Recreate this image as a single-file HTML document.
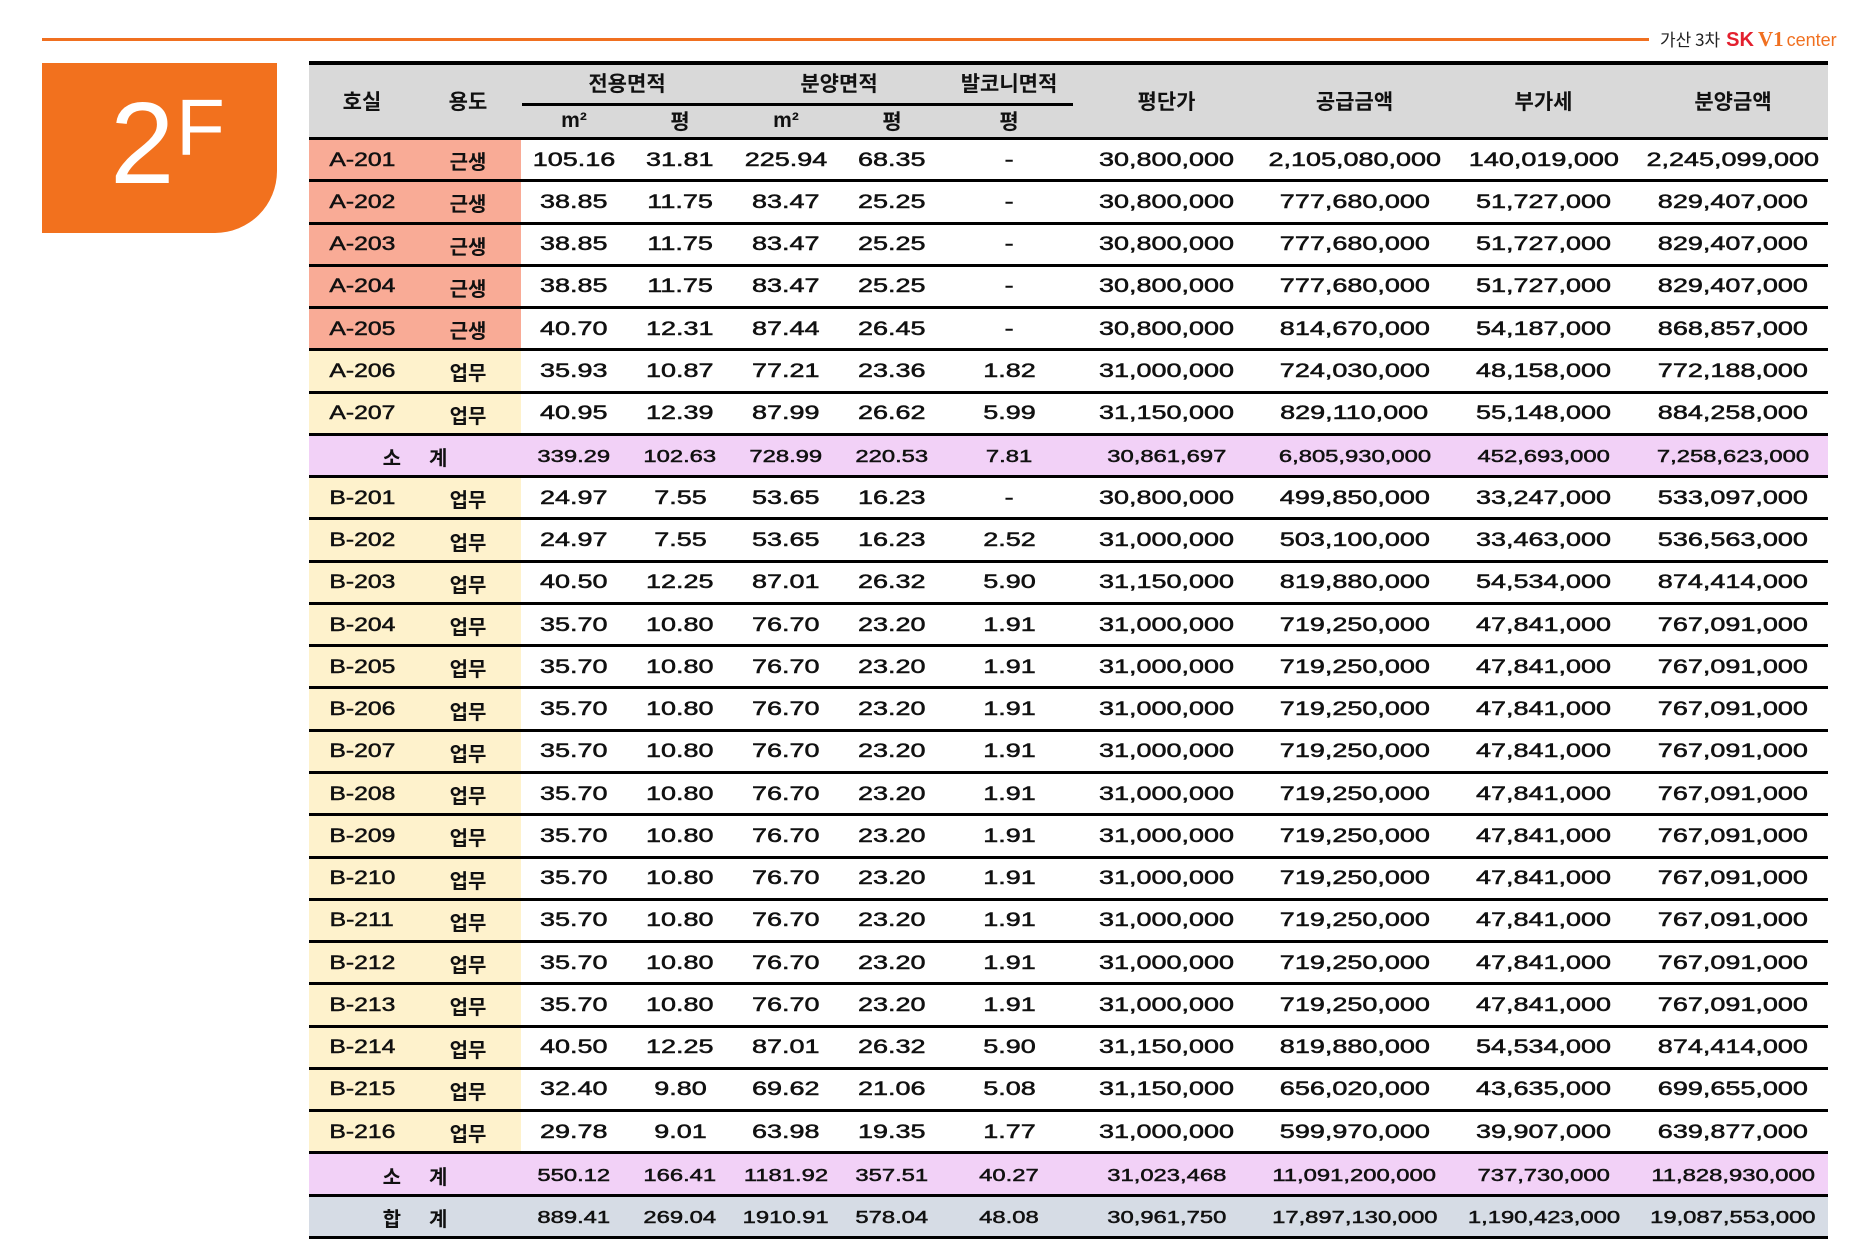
<!DOCTYPE html>
<html><head><meta charset="utf-8">
<style>
*{margin:0;padding:0;box-sizing:border-box}
body{width:1851px;height:1247px;background:#fff;position:relative;overflow:hidden;font-family:"Liberation Sans","Noto Sans CJK KR",sans-serif;color:#111}
.line{position:absolute;left:42px;top:38px;width:1607px;height:3px;background:#f07020}
.logo{position:absolute;left:1660px;top:28px;font-size:18px;white-space:nowrap;line-height:22px}
.logo .k{color:#222;font-family:"Noto Sans CJK KR",sans-serif;font-size:17px}
.logo .sk{color:#e3202e;font-weight:bold;font-size:20px;margin-left:6px}
.logo .v{color:#f07020;font-weight:bold;font-family:"Liberation Serif",serif;font-size:21px;margin-left:4px}
.logo .c{color:#f07020;font-size:18px;margin-left:3px}
.badge{position:absolute;left:42px;top:63px;width:235px;height:170px;background:#f2711e;border-bottom-right-radius:62px}
.badge .two{position:absolute;left:68px;top:22px;font-size:116px;line-height:116px;color:#fff}
.badge .f{position:absolute;left:134px;top:25px;font-size:80px;line-height:80px;color:#fff}
.tbl{position:absolute;left:309px;top:61px;width:1519px}
.hd{position:relative;height:79px;border-top:4px solid #000;border-bottom:3px solid #000;background:#d9d9d9}
.hd div{position:absolute;text-align:center;font-weight:bold;font-size:21px;font-family:"Noto Sans CJK KR",sans-serif;line-height:24px}
.row{display:flex;height:42.27px;border-bottom:3px solid #000}
.row div{display:flex;align-items:center;justify-content:center;font-size:19px;flex:none;padding-top:2px}
.n{display:inline-block;transform:scaleX(1.42);-webkit-text-stroke:0.5px #111}
.ko{font-weight:bold;font-family:"Noto Sans CJK KR",sans-serif;font-size:20px!important}
.A .c1,.A .c2{background:#f9ab96}
.B .c1,.B .c2{background:#fef2cc}
.S{background:#f2d1f7}
.T{background:#d6dce5}
.S .n,.T .n{transform:scaleX(1.36);font-size:17.5px}
.w1{width:106px}.w2{width:106px}.w3{width:106px}.w4{width:106px}.w5{width:106px}.w6{width:106px}.w7{width:128px}.w8{width:187px}.w9{width:189px}.w10{width:189px}.w11{width:190px}
.sp{width:212px;font-weight:bold;font-family:"Noto Sans CJK KR",sans-serif}
.sp span{margin:0 14px}
</style></head><body>
<div class="line"></div>
<div class="logo"><span class="k">가산 3차</span><span class="sk">SK</span><span class="v">V1</span><span class="c">center</span></div>
<div class="badge"><span class="two">2</span><span class="f">F</span></div>
<div class="tbl">
<div class="hd">
<div style="left:0;width:106px;top:24px">호실</div>
<div style="left:106px;width:106px;top:24px">용도</div>
<div style="left:212px;width:212px;top:6px">전용면적</div>
<div style="left:424px;width:212px;top:6px">분양면적</div>
<div style="left:636px;width:128px;top:6px">발코니면적</div>
<div style="left:213px;width:551px;top:38px;height:3px;background:#000"></div>
<div style="left:212px;width:106px;top:44px;font-family:'Liberation Sans',sans-serif">m²</div>
<div style="left:318px;width:106px;top:44px">평</div>
<div style="left:424px;width:106px;top:44px;font-family:'Liberation Sans',sans-serif">m²</div>
<div style="left:530px;width:106px;top:44px">평</div>
<div style="left:636px;width:128px;top:44px">평</div>
<div style="left:764px;width:187px;top:24px">평단가</div>
<div style="left:951px;width:189px;top:24px">공급금액</div>
<div style="left:1140px;width:189px;top:24px">부가세</div>
<div style="left:1329px;width:190px;top:24px">분양금액</div>
</div>
<div id="body"></div>
</div>
<script>
var rows=[
["A","A-201","근생","105.16","31.81","225.94","68.35","-","30,800,000","2,105,080,000","140,019,000","2,245,099,000"],
["A","A-202","근생","38.85","11.75","83.47","25.25","-","30,800,000","777,680,000","51,727,000","829,407,000"],
["A","A-203","근생","38.85","11.75","83.47","25.25","-","30,800,000","777,680,000","51,727,000","829,407,000"],
["A","A-204","근생","38.85","11.75","83.47","25.25","-","30,800,000","777,680,000","51,727,000","829,407,000"],
["A","A-205","근생","40.70","12.31","87.44","26.45","-","30,800,000","814,670,000","54,187,000","868,857,000"],
["B","A-206","업무","35.93","10.87","77.21","23.36","1.82","31,000,000","724,030,000","48,158,000","772,188,000"],
["B","A-207","업무","40.95","12.39","87.99","26.62","5.99","31,150,000","829,110,000","55,148,000","884,258,000"],
["S","소","계","339.29","102.63","728.99","220.53","7.81","30,861,697","6,805,930,000","452,693,000","7,258,623,000"],
["B","B-201","업무","24.97","7.55","53.65","16.23","-","30,800,000","499,850,000","33,247,000","533,097,000"],
["B","B-202","업무","24.97","7.55","53.65","16.23","2.52","31,000,000","503,100,000","33,463,000","536,563,000"],
["B","B-203","업무","40.50","12.25","87.01","26.32","5.90","31,150,000","819,880,000","54,534,000","874,414,000"]];
for(var i=204;i<=213;i++)rows.push(["B","B-"+i,"업무","35.70","10.80","76.70","23.20","1.91","31,000,000","719,250,000","47,841,000","767,091,000"]);
rows.push(["B","B-214","업무","40.50","12.25","87.01","26.32","5.90","31,150,000","819,880,000","54,534,000","874,414,000"]);
rows.push(["B","B-215","업무","32.40","9.80","69.62","21.06","5.08","31,150,000","656,020,000","43,635,000","699,655,000"]);
rows.push(["B","B-216","업무","29.78","9.01","63.98","19.35","1.77","31,000,000","599,970,000","39,907,000","639,877,000"]);
rows.push(["S","소","계","550.12","166.41","1181.92","357.51","40.27","31,023,468","11,091,200,000","737,730,000","11,828,930,000"]);
rows.push(["T","합","계","889.41","269.04","1910.91","578.04","48.08","30,961,750","17,897,130,000","1,190,423,000","19,087,553,000"]);
var h="";
rows.forEach(function(r){
 h+='<div class="row '+r[0]+'">';
 if(r[0]=="S"||r[0]=="T"){h+='<div class="sp ko"><span>'+r[1]+'</span><span>'+r[2]+'</span></div>';}
 else{h+='<div class="w1 c1"><span class="n" style="transform:scaleX(1.3)">'+r[1]+'</span></div><div class="w2 c2 ko">'+r[2]+'</div>';}
 for(var j=3;j<12;j++)h+='<div class="w'+j+'"><span class="n">'+r[j]+'</span></div>';
 h+='</div>';
});
document.getElementById("body").innerHTML=h;
</script>
</body></html>
